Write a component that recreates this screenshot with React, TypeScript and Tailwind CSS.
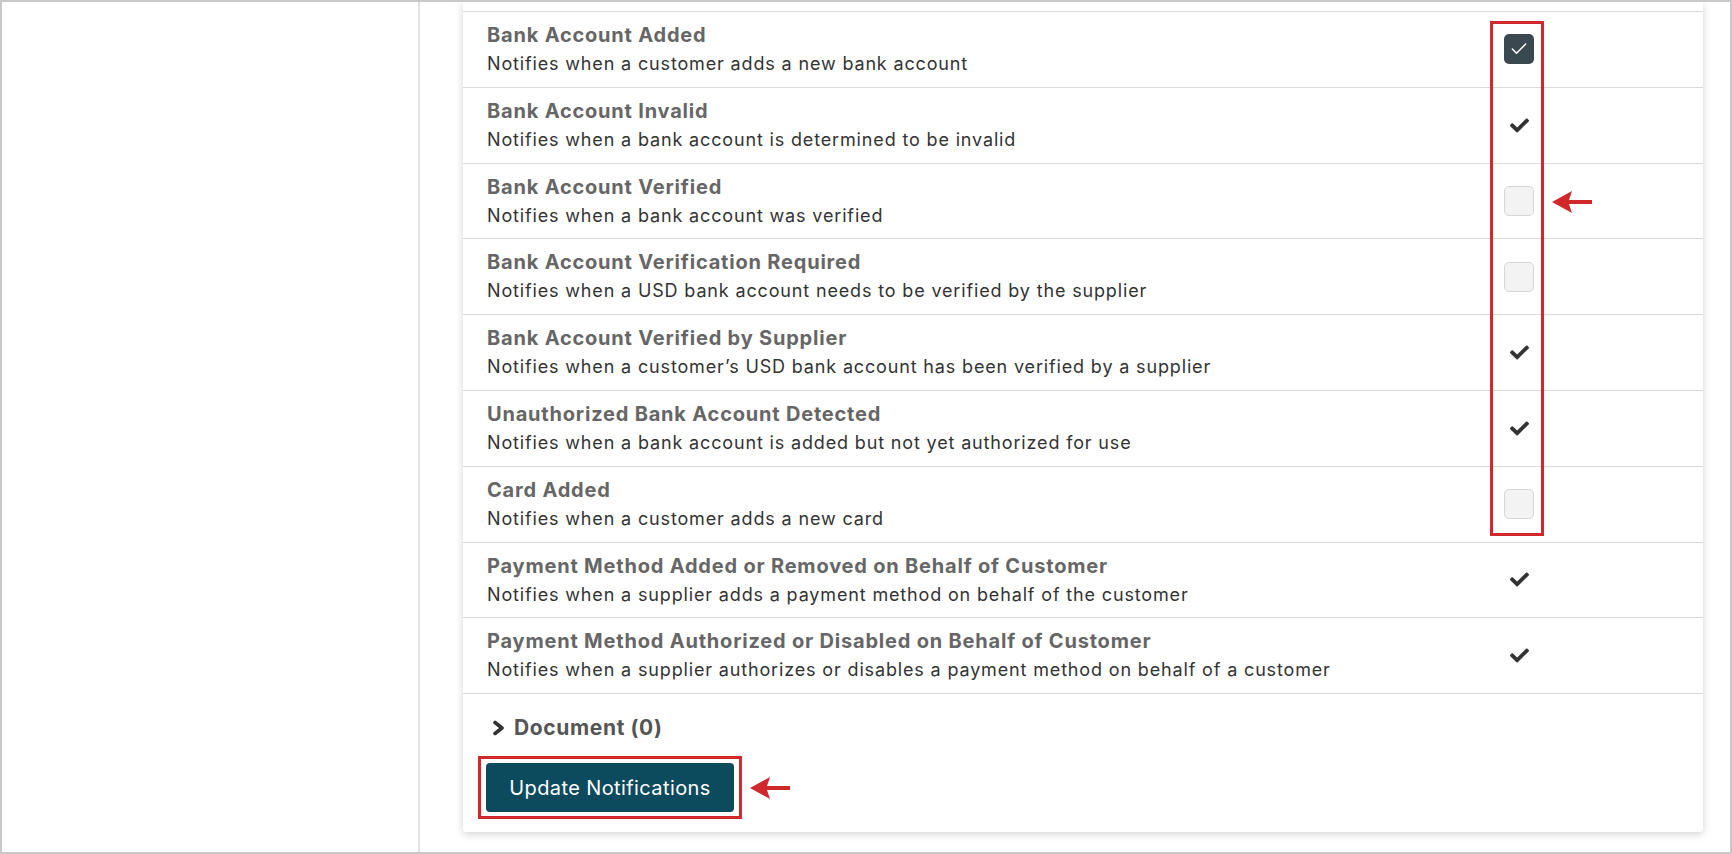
import { Check } from "lucide-react";
import { FaCheck } from "react-icons/fa";

type Mark = "box-on" | "box-off" | "tick";

const rows: { title: string; desc: string; mark: Mark }[] = [
  { title: "Bank Account Added", desc: "Notifies when a customer adds a new bank account", mark: "box-on" },
  { title: "Bank Account Invalid", desc: "Notifies when a bank account is determined to be invalid", mark: "tick" },
  { title: "Bank Account Verified", desc: "Notifies when a bank account was verified", mark: "box-off" },
  { title: "Bank Account Verification Required", desc: "Notifies when a USD bank account needs to be verified by the supplier", mark: "box-off" },
  { title: "Bank Account Verified by Supplier", desc: "Notifies when a customer\u2019s USD bank account has been verified by a supplier", mark: "tick" },
  { title: "Unauthorized Bank Account Detected", desc: "Notifies when a bank account is added but not yet authorized for use", mark: "tick" },
  { title: "Card Added", desc: "Notifies when a customer adds a new card", mark: "box-off" },
  { title: "Payment Method Added or Removed on Behalf of Customer", desc: "Notifies when a supplier adds a payment method on behalf of the customer", mark: "tick" },
  { title: "Payment Method Authorized or Disabled on Behalf of Customer", desc: "Notifies when a supplier authorizes or disables a payment method on behalf of a customer", mark: "tick" },
];

function Arrow({ className }: { className?: string }) {
  return (
    <svg className={className} width="40" height="22" viewBox="0 0 40 22" fill="#d0282b">
      <polygon points="0,11 20,0 17,9 40,9 40,13 17,13 20,22" />
    </svg>
  );
}

function MarkCell({ mark }: { mark: Mark }) {
  if (mark === "box-on") {
    return (
      <span className="flex h-[30px] w-[30px] items-center justify-center rounded-[5px] bg-[#3a4950]">
        <Check size={20} strokeWidth={1.8} className="text-white" />
      </span>
    );
  }
  if (mark === "box-off") {
    return <span className="block h-[30px] w-[30px] rounded-[5px] border border-[#d6d6d6] bg-[#f3f3f3]" />;
  }
  return <FaCheck size={19} className="text-[#333]" />;
}

export default function App() {
  return (
    <div className="flex h-[854px] w-[1732px] overflow-hidden border-2 border-[#c9c9c9] bg-white font-['Inter',sans-serif]">
      <div className="w-[418px] shrink-0 border-r-2 border-[#e2e2e2]" />
      <div className="flex-1 pl-[43px] pr-[24px]">
        <div className="relative w-[1240px] rounded-b-[3px] bg-white shadow-[0_2px_8px_rgba(0,0,0,0.18)]">
          <div className="h-[9px]" />
          {rows.map((r) => (
            <div key={r.title} className="flex h-[75.8px] items-start border-t border-[#d9d9d9] pl-[24px] pr-[134px]">
              <div className="flex-1 pt-[11px]">
                <div className="text-[20px] font-bold leading-[24px] tracking-[0.04em] text-[#666]">{r.title}</div>
                <div className="mt-[5px] text-[18px] leading-[24px] tracking-[0.047em] text-[#333]">{r.desc}</div>
              </div>
              <div className="flex h-full w-[100px] items-center justify-center">
                <MarkCell mark={r.mark} />
              </div>
            </div>
          ))}
          <div className="border-t border-[#d9d9d9] pl-[15px] pt-[20px] pb-[13px]">
            <div className="flex items-center gap-[9px] pl-[14px] text-[21px] font-bold leading-[28px] tracking-[0.03em] text-[#555]">
              {/* collapsed section chevron */}
              <svg width="13" height="16" viewBox="0 0 13 16" fill="none" stroke="#333" strokeWidth="3.6" strokeLinecap="round" strokeLinejoin="round">
                <polyline points="3,2.5 10,8 3,13.5" />
              </svg>
              <span>Document (0)</span>
            </div>
            <div className="mt-[14px] flex items-center gap-[8px]">
              <div className="border-[3px] border-[#d0282b] px-[5px] py-[4px]">
                <button type="button" className="h-[49px] w-[248px] rounded-[4px] bg-[#0c4a5e] text-[20px] tracking-[0.02em] text-white">
                  Update Notifications
                </button>
              </div>
              <Arrow />
            </div>
          </div>
          <div className="pointer-events-none absolute left-[1027px] top-[19px] h-[515px] w-[54px] border-[3px] border-[#d0282b]" />
          <Arrow className="absolute left-[1089px] top-[189px]" />
        </div>
      </div>
    </div>
  );
}
